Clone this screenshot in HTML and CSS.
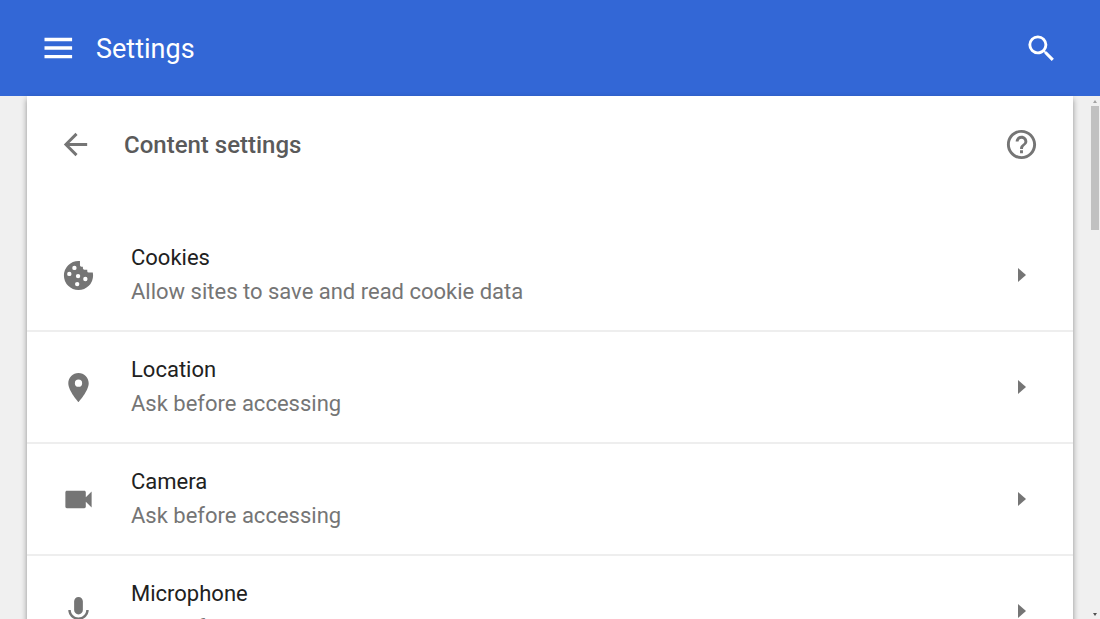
FILE: index.html
```html
<!DOCTYPE html>
<html lang="en">
<head>
  <meta charset="UTF-8" />
  <meta name="viewport" content="width=device-width, initial-scale=1.0"/>
  <title>Settings</title>
  <link rel="stylesheet" href="styles.css">
</head>
<body>
  <header class="toolbar">
    <button type="button" class="icon-btn menu-btn" aria-label="Main menu">
      <svg viewBox="0 0 24 24"><path d="M3 5.200h18.400v2.300H3zM3 10.900h18.400v2.300H3zM3 16.600h18.400v2.300H3z"/></svg>
    </button>
    <h1>Settings</h1>
    <button type="button" class="icon-btn" aria-label="Search settings">
      <svg viewBox="0 0 24 24"><path d="M15.5 14h-.79l-.28-.27A6.471 6.471 0 0 0 16 9.5 6.5 6.5 0 1 0 9.5 16c1.61 0 3.09-.59 4.23-1.57l.27.28v.79l5 4.99L20.49 19l-4.99-5zm-6 0C7.01 14 5 11.99 5 9.5S7.01 5 9.5 5 14 7.01 14 9.5 11.99 14 9.5 14z"/></svg>
    </button>
  </header>

  <div class="content">
    <main class="card">
      <div class="card-header">
        <button type="button" class="icon-btn" aria-label="Back">
          <svg viewBox="0 0 24 24"><path d="M20 11H7.83l5.59-5.59L12 4l-8 8 8 8 1.41-1.41L7.83 13H20v-2z"/></svg>
        </button>
        <h2>Content settings</h2>
        <button type="button" class="icon-btn" aria-label="Help">
          <svg viewBox="0 0 24 24"><path d="M11 18h2v-2h-2v2zm1-16C6.48 2 2 6.48 2 12s4.48 10 10 10 10-4.48 10-10S17.52 2 12 2zm0 18c-4.41 0-8-3.59-8-8s3.59-8 8-8 8 3.59 8 8-3.59 8-8 8zm0-14c-2.21 0-4 1.79-4 4h2c0-1.1.9-2 2-2s2 .9 2 2c0 2-3 1.75-3 5h2c0-2.25 3-2.5 3-5 0-2.21-1.79-4-4-4z"/></svg>
        </button>
      </div>

      <ul class="settings-list">
        <li>
          <a class="row" href="#cookies">
            <svg viewBox="0 0 24 24"><path fill-rule="evenodd" d="M12 2a10 10 0 1 0 10 10c0-.7-.1-1.3-.2-2H19a1 1 0 0 1-1-1V8h-2a1 1 0 0 1-1-1V6h-1a1 1 0 0 1-1-1V2.100A10 10 0 0 0 12 2zM9.200 5.300a1.500 1.500 0 1 1 0 3 1.500 1.500 0 0 1 0-3zM5.700 9.400a1.500 1.500 0 1 1 0 3 1.500 1.500 0 0 1 0-3zm6 1.500a1.500 1.500 0 1 1 0 3 1.500 1.500 0 0 1 0-3zm5 2a1.500 1.500 0 1 1 0 3 1.500 1.500 0 0 1 0-3zm-5.600 3.500a1.500 1.500 0 1 1 0 3 1.500 1.500 0 0 1 0-3z"/></svg>
            <span class="text">
              <span class="label">Cookies</span>
              <span class="detail">Allow sites to save and read cookie data</span>
            </span>
            <span class="arrow"></span>
          </a>
        </li>
        <li>
          <a class="row" href="#location">
            <svg viewBox="0 0 24 24"><path d="M12 2C8.13 2 5 5.13 5 9c0 5.25 7 13 7 13s7-7.75 7-13c0-3.87-3.13-7-7-7zm0 9.5a2.5 2.5 0 0 1 0-5 2.5 2.5 0 0 1 0 5z"/></svg>
            <span class="text">
              <span class="label">Location</span>
              <span class="detail">Ask before accessing</span>
            </span>
            <span class="arrow"></span>
          </a>
        </li>
        <li>
          <a class="row" href="#camera">
            <svg viewBox="0 0 24 24"><path d="M17 10.5V7c0-.55-.45-1-1-1H4c-.55 0-1 .45-1 1v10c0 .55.45 1 1 1h12c.55 0 1-.45 1-1v-3.500l4 4v-11l-4 4z"/></svg>
            <span class="text">
              <span class="label">Camera</span>
              <span class="detail">Ask before accessing</span>
            </span>
            <span class="arrow"></span>
          </a>
        </li>
        <li>
          <a class="row" href="#microphone">
            <svg viewBox="0 0 24 24"><path d="M12 14c1.660 0 2.990-1.340 2.990-3L15 5c0-1.660-1.340-3-3-3S9 3.340 9 5v6c0 1.660 1.340 3 3 3zm5.300-3c0 3-2.540 5.100-5.300 5.100S6.700 14 6.700 11H5c0 3.410 2.720 6.230 6 6.720V21h2v-3.280c3.280-.48 6-3.300 6-6.720h-1.700z"/></svg>
            <span class="text">
              <span class="label">Microphone</span>
              <span class="detail">Ask before accessing</span>
            </span>
            <span class="arrow"></span>
          </a>
        </li>
      </ul>
    </main>

    <div class="scrollbar" aria-hidden="true">
      <span class="scroll-up"></span>
      <span class="scroll-thumb"></span>
      <span class="scroll-down"></span>
    </div>
  </div>
</body>
</html>
```
FILE: styles.css
```css
* {
  box-sizing: border-box;
}

body {
  display: flex;
  flex-direction: column;
  height: 100vh;
  margin: 0;
  overflow: hidden;
  font-family: Roboto, sans-serif;
  background: #f0f0f0;
  color: #212121;
}

h1,
h2 {
  flex: 1;
  margin: 0;
  padding-top: 2px;
}

svg {
  display: block;
  flex: none;
  width: 35px;
  height: 35px;
  fill: currentColor;
}

.icon-btn {
  flex: none;
  padding: 0;
  border: none;
  background: none;
  color: inherit;
  cursor: pointer;
}

.toolbar {
  display: flex;
  align-items: center;
  flex: none;
  gap: 20px;
  height: 96px;
  padding: 0 41px 0 40px;
  background: #3367d6;
  color: #fff;
}

.toolbar h1 {
  font-size: 27px;
  font-weight: 400;
}

.menu-btn svg {
  width: 36px;
  height: 36px;
}

.content {
  display: flex;
  flex: 1;
  gap: 18px;
  min-height: 0;
  padding-left: 27px;
}

.card {
  flex: 1;
  align-self: flex-start;
  background: #fff;
  box-shadow: 0 3px 6px rgba(0, 0, 0, 0.4);
}

.card-header {
  display: flex;
  align-items: center;
  gap: 31px;
  height: 96px;
  padding: 0 34px 0 31px;
  color: #757575;
}

.card-header h2 {
  font-size: 24px;
  font-weight: 500;
  color: #5a5a5a;
}

.settings-list {
  margin: 0;
  padding: 28px 0 0;
  list-style: none;
}

.row {
  display: flex;
  align-items: center;
  gap: 35px;
  height: 112px;
  padding: 0 47px 0 34px;
  border-bottom: 2px solid #eee;
  color: #757575;
  text-decoration: none;
}

.text {
  display: flex;
  flex: 1;
  flex-direction: column;
  font-size: 22px;
  line-height: 34px;
}

.label {
  color: #212121;
}

.arrow {
  border: 7px solid transparent;
  border-left: 8px solid #757575;
  border-right: none;
}

.scrollbar {
  display: flex;
  flex: none;
  flex-direction: column;
  align-items: center;
  gap: 3px;
  width: 9px;
  padding: 4px 1px 3px 0;
}

.scroll-up {
  border: 2px solid transparent;
  border-top: none;
  border-bottom: 3px solid #a3a3a3;
}

.scroll-thumb {
  width: 8px;
  height: 24%;
  background: #c1c1c1;
}

.scroll-down {
  margin-top: auto;
  border: 2px solid transparent;
  border-top: 3px solid #505050;
  border-bottom: none;
}
```
